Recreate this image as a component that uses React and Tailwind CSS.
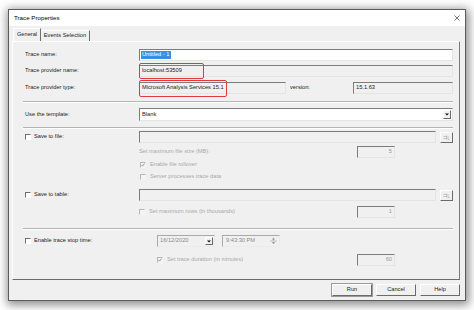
import React from 'react';

const sunken = "border border-t-[#7c7c7c] border-l-[#7c7c7c] border-r-[#e4e4e4] border-b-[#e4e4e4]";
const sunkenLight = "border border-t-[#a9a9a9] border-l-[#a9a9a9] border-r-[#ececec] border-b-[#ececec]";
const raised = "border border-t-white border-l-white border-r-[#6a6a6a] border-b-[#6a6a6a] bg-[#f0f0f0]";

function Check({ checked, disabled }) {
  return (
    <span
      className={
        "w-[6px] h-[6px] shrink-0 flex items-center justify-center border " +
        (disabled
          ? "border-t-[#b7b7b7] border-l-[#b7b7b7] border-r-[#f4f4f4] border-b-[#f4f4f4] bg-[#f4f4f4]"
          : "border-t-[#6e6e6e] border-l-[#6e6e6e] border-r-white border-b-white bg-white")
      }
    >
      {checked && (
        <svg width="4" height="4" viewBox="0 0 4 4">
          <polyline points="0.4,1.9 1.5,3.1 3.6,0.5" fill="none" stroke="#8c8c8c" strokeWidth="0.9" />
        </svg>
      )}
    </span>
  );
}

function Arrow() {
  return (
    <svg width="4" height="3" viewBox="0 0 4 3">
      <polygon points="0,0.5 4,0.5 2,2.6" fill="#111" />
    </svg>
  );
}

function Separator({ mt }) {
  return (
    <div className={mt + " -ml-[2px] h-[2px] flex flex-col"}>
      <div className="h-[1px] bg-[#b4b4b4]" />
      <div className="h-[1px] bg-white" />
    </div>
  );
}

function BrowseBtn() {
  return (
    <div className={"ml-[4px] w-[13px] h-[11px] flex items-center justify-center " + raised}>
      <svg width="7" height="5" viewBox="0 0 7 5">
        <path d="M0.5 1.5H3.5M0.5 3.5H3.5M3.5 0.5V4.5M5 1V4.5H6.5" fill="none" stroke="#b0b0b0" strokeWidth="0.7" />
      </svg>
    </div>
  );
}

function SmallBox({ value }) {
  return (
    <div className={"w-[38px] h-[12px] flex items-center justify-end pr-[2px] bg-[#f0f0f0] text-[#9a9a9a] " + sunken}>
      {value}
    </div>
  );
}

export default function App() {
  return (
    <div className="w-[474px] h-[310px] bg-white overflow-hidden font-['Liberation_Sans',Arial,sans-serif] text-[5.7px] text-[#1c1c1c] leading-none pt-[9px]">
      <div className="ml-[8px] w-[458px] h-[292px] border border-[#5b5b5b] bg-[#f0f0f0] shadow-[1px_2px_9px_2px_rgba(0,0,0,0.45)] flex flex-col">
        {/* title bar */}
        <div className="h-[16px] bg-white flex items-center justify-between pl-[5px] pr-[5px]">
          <span className="text-[6.2px] text-black">Trace Properties</span>
          <svg width="6" height="6" viewBox="0 0 6 6">
            <path d="M0.5 0.5L5.5 5.5M5.5 0.5L0.5 5.5" stroke="#3a3a3a" strokeWidth="0.7" />
          </svg>
        </div>

        {/* body */}
        <div className="flex-1 flex flex-col pt-[2px] pl-[3px] pr-[5px]">
          {/* tabs */}
          <div className="h-[13px] flex items-end pl-[1px]">
            <div className="w-[28px] h-[13px] flex items-center justify-center border-l border-t border-r border-l-white border-t-white border-r-[#6f6f6f] bg-[#f0f0f0]">
              General
            </div>
            <div className="w-[49px] h-[11px] flex items-center justify-center border-t border-r border-t-white border-r-[#6f6f6f]">
              Events Selection
            </div>
          </div>

          {/* panel */}
          <div className="w-[448px] h-[239px] border border-t-white border-l-white border-r-[#7a7a7a] border-b-[#6a6a6a] flex flex-col pl-[12px] pr-[6px]">
            {/* Trace name */}
            <div className="mt-[7px] h-[12px] flex items-center">
              <span className="w-[114px]">Trace name:</span>
              <div className={"flex-1 h-full bg-white flex items-center pl-[1px] " + sunken}>
                <span className="bg-[#3a8ee6] text-white px-[1px] h-[8px] flex items-center">Untitled - 1</span>
              </div>
            </div>

            {/* Provider name */}
            <div className="mt-[4px] h-[12px] flex items-center">
              <span className="w-[114px]">Trace provider name:</span>
              <div className={"flex-1 h-full bg-[#f0f0f0] flex items-center pl-[2px] relative " + sunken}>
                localhost:53509
                <div className="absolute left-[-1px] top-[-3px] w-[65px] h-[16px] border-[1.5px] border-[#e0393b] rounded-[2px]" />
              </div>
            </div>

            {/* Provider type */}
            <div className="mt-[5px] h-[12px] flex items-center">
              <span className="w-[114px]">Trace provider type:</span>
              <div className={"w-[147px] h-full bg-[#f0f0f0] flex items-center pl-[2px] relative " + sunken}>
                Microsoft Analysis Services 15.1
                <div className="absolute left-[-1px] top-[-3px] w-[88px] h-[17px] border-[1.5px] border-[#e0393b] rounded-[2px]" />
              </div>
              <span className="ml-[4px] w-[63px]">version:</span>
              <div className={"flex-1 h-full bg-[#f0f0f0] flex items-center pl-[2px] " + sunken}>15.1.63</div>
            </div>

            <Separator mt="mt-[7px]" />

            {/* template */}
            <div className="mt-[5px] h-[13px] flex items-center">
              <span className="w-[114px]">Use the template:</span>
              <div className={"flex-1 h-full bg-white flex items-center pl-[2px] pr-[1px] " + sunken}>
                <span className="flex-1">Blank</span>
                <div className={"w-[8px] h-[9px] flex items-center justify-center " + raised}>
                  <Arrow />
                </div>
              </div>
            </div>

            <Separator mt="mt-[6px]" />

            {/* Save to file */}
            <div className="mt-[2px] h-[12px] flex items-center">
              <div className="w-[114px] flex items-center gap-[3px]">
                <Check />
                <span>Save to file:</span>
              </div>
              <div className={"flex-1 h-full bg-[#f0f0f0] " + sunken} />
              <BrowseBtn />
            </div>

            {/* max file size */}
            <div className="mt-[3px] h-[12px] flex items-center pl-[114px] text-[#a9a9a9]">
              <span className="w-[218px]">Set maximum file size (MB):</span>
              <SmallBox value="5" />
            </div>

            <div className="mt-[1px] h-[12px] flex items-center pl-[115px] gap-[4px] text-[#a9a9a9]">
              <Check checked disabled />
              <span>Enable file rollover</span>
            </div>

            <div className="h-[12px] flex items-center pl-[115px] gap-[4px] text-[#a9a9a9]">
              <Check disabled />
              <span>Server processes trace data</span>
            </div>

            {/* Save to table */}
            <div className="mt-[6px] h-[12px] flex items-center">
              <div className="w-[114px] flex items-center gap-[3px]">
                <Check />
                <span>Save to table:</span>
              </div>
              <div className={"flex-1 h-full bg-[#f0f0f0] " + sunken} />
              <BrowseBtn />
            </div>

            {/* max rows */}
            <div className="mt-[5px] h-[12px] flex items-center pl-[114px] text-[#a9a9a9]">
              <div className="w-[218px] flex items-center gap-[4px]">
                <Check disabled />
                <span>Set maximum rows (in thousands)</span>
              </div>
              <SmallBox value="1" />
            </div>

            <Separator mt="mt-[10px]" />

            {/* stop time */}
            <div className="mt-[5px] h-[12px] flex items-center">
              <div className="w-[132px] flex items-center gap-[3px]">
                <Check />
                <span>Enable trace stop time:</span>
              </div>
              <div className={"w-[58px] h-full bg-[#f0f0f0] flex items-center pl-[2px] pr-[1px] text-[#8a8a8a] " + sunkenLight}>
                <span className="flex-1">16/12/2020</span>
                <div className={"w-[8px] h-[8px] flex items-center justify-center " + raised}>
                  <Arrow />
                </div>
              </div>
              <div className={"ml-[7px] w-[58px] h-full bg-[#f0f0f0] flex items-center pl-[3px] pr-[2px] text-[#8a8a8a] " + sunkenLight}>
                <span className="flex-1">9:43:30 PM</span>
                <svg width="7" height="8" viewBox="0 0 7 8">
                  <path d="M0 4H7M3.5 0.5V3.5" stroke="#9a9a9a" strokeWidth="0.6" />
                  <polygon points="1.8,2.6 5.2,2.6 3.5,1" fill="#8a8a8a" />
                  <polygon points="1.8,5.2 5.2,5.2 3.5,6.9" fill="#8a8a8a" />
                </svg>
              </div>
            </div>

            {/* duration */}
            <div className="mt-[7px] h-[12px] flex items-center pl-[132px] text-[#a9a9a9]">
              <div className="w-[200px] flex items-center gap-[4px]">
                <Check checked disabled />
                <span>Set trace duration (in minutes)</span>
              </div>
              <SmallBox value="60" />
            </div>
          </div>

          {/* buttons */}
          <div className="mt-[4px] h-[12px] flex justify-end gap-[4px]">
            <div className={"w-[40px] h-full flex items-center justify-center outline outline-1 outline-[#9a9a9a] " + raised}>Run</div>
            <div className={"w-[40px] h-full flex items-center justify-center " + raised}>Cancel</div>
            <div className={"w-[40px] h-full flex items-center justify-center " + raised}>Help</div>
          </div>
        </div>
      </div>
    </div>
  );
}
